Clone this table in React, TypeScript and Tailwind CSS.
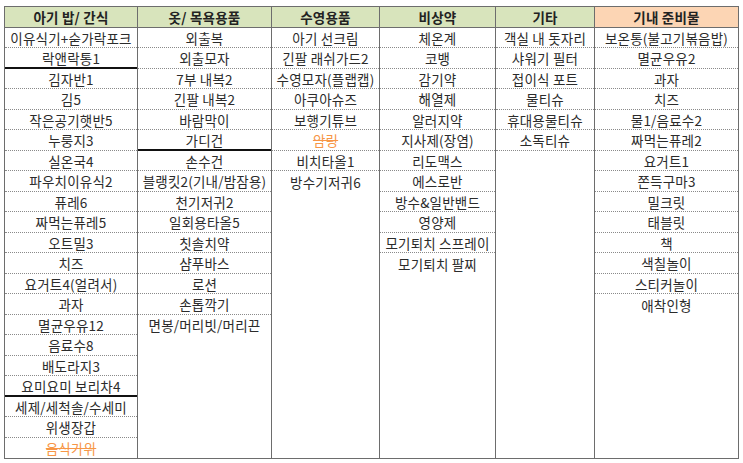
import React from "react";

type Item = { t: string; strike?: boolean; thick?: boolean };

type Col = {
  title: string;
  w: string;
  head: string;
  items: Item[];
  lastLine?: boolean;
};

const cols: Col[] = [
  {
    title: "아기 밥/ 간식",
    w: "w-[133px]",
    head: "bg-[#d8e4bc]",
    items: [
      { t: "이유식기+숟가락포크" },
      { t: "락앤락통1", thick: true },
      { t: "김자반1" },
      { t: "김5" },
      { t: "작은공기햇반5" },
      { t: "누룽지3" },
      { t: "실온국4" },
      { t: "파우치이유식2" },
      { t: "퓨레6" },
      { t: "짜먹는퓨레5" },
      { t: "오트밀3" },
      { t: "치즈" },
      { t: "요거트4(얼려서)" },
      { t: "과자" },
      { t: "멸균우유12" },
      { t: "음료수8" },
      { t: "배도라지3" },
      { t: "요미요미 보리차4", thick: true },
      { t: "세제/세척솔/수세미" },
      { t: "위생장갑" },
      { t: "음식가위", strike: true },
    ],
  },
  {
    title: "옷/ 목욕용품",
    w: "w-[134px]",
    head: "bg-[#d8e4bc]",
    items: [
      { t: "외출복" },
      { t: "외출모자" },
      { t: "7부 내복2" },
      { t: "긴팔 내복2" },
      { t: "바람막이" },
      { t: "가디건", thick: true },
      { t: "손수건" },
      { t: "블랭킷2(기내/밤잠용)" },
      { t: "천기저귀2" },
      { t: "일회용타올5" },
      { t: "칫솔치약" },
      { t: "샴푸바스" },
      { t: "로션" },
      { t: "손톱깍기" },
      { t: "면봉/머리빗/머리끈" },
    ],
  },
  {
    title: "수영용품",
    w: "w-[108px]",
    head: "bg-[#d8e4bc]",
    items: [
      { t: "아기 선크림" },
      { t: "긴팔 래쉬가드2" },
      { t: "수영모자(플랩캡)" },
      { t: "아쿠아슈즈" },
      { t: "보행기튜브" },
      { t: "암링", strike: true },
      { t: "비치타올1" },
      { t: "방수기저귀6" },
    ],
  },
  {
    title: "비상약",
    w: "w-[116px]",
    head: "bg-[#d8e4bc]",
    items: [
      { t: "체온계" },
      { t: "코뱅" },
      { t: "감기약" },
      { t: "해열제" },
      { t: "알러지약" },
      { t: "지사제(장염)" },
      { t: "리도맥스" },
      { t: "에스로반" },
      { t: "방수&일반밴드" },
      { t: "영양제" },
      { t: "모기퇴치 스프레이" },
      { t: "모기퇴치 팔찌" },
    ],
  },
  {
    title: "기타",
    w: "w-[99px]",
    head: "bg-[#d8e4bc]",
    lastLine: true,
    items: [
      { t: "객실 내 돗자리" },
      { t: "샤워기 필터" },
      { t: "접이식 포트" },
      { t: "물티슈" },
      { t: "휴대용물티슈" },
      { t: "소독티슈" },
    ],
  },
  {
    title: "기내 준비물",
    w: "flex-1",
    head: "bg-[#fcd5b4]",
    items: [
      { t: "보온통(불고기볶음밥)" },
      { t: "멸균우유2" },
      { t: "과자" },
      { t: "치즈" },
      { t: "물1/음료수2" },
      { t: "짜먹는퓨레2" },
      { t: "요거트1" },
      { t: "쫀득구마3" },
      { t: "밀크릿" },
      { t: "태블릿" },
      { t: "책" },
      { t: "색칠놀이" },
      { t: "스티커놀이" },
      { t: "애착인형" },
    ],
  },
];

const Cell = ({ item, line }: { item: Item; line: boolean }) => {
  let border = "";
  if (item.thick) border = "border-b-2 border-solid border-[#111]";
  else if (line) border = "border-b border-dotted border-[#8a8a8a]";
  return (
    <div
      className={`h-[20.5px] shrink-0 flex items-center justify-center whitespace-nowrap pt-[2px] ${border} ${
        item.strike ? "text-[#f79646] line-through" : "text-[#2b2b2b]"
      }`}
    >
      {item.t}
    </div>
  );
};

export default function App() {
  return (
    <div
      className="w-[743px] h-[463px] bg-white pt-[6px] pl-[4px]"
      style={{ fontFamily: '"Noto Sans CJK KR", "Noto Sans", sans-serif' }}
    >
      <div className="flex w-[735px] h-[453px] border border-[#6d6d6d] text-[13.5px] tracking-[0.2px] leading-none">
        {cols.map((c, ci) => (
          <div
            key={c.title}
            className={`${c.w} flex flex-col ${ci < cols.length - 1 ? "border-r border-[#6d6d6d]" : ""}`}
          >
            <div
              className={`h-[20.5px] shrink-0 flex items-center justify-center pt-[1px] font-bold text-[#222] border-b border-[#6d6d6d] ${c.head}`}
            >
              {c.title}
            </div>
            {c.items.map((it, i) => (
              <Cell
                key={i}
                item={it}
                line={i < c.items.length - 1 ? true : !!c.lastLine}
              />
            ))}
            <div className="flex-1" />
          </div>
        ))}
      </div>
    </div>
  );
}
